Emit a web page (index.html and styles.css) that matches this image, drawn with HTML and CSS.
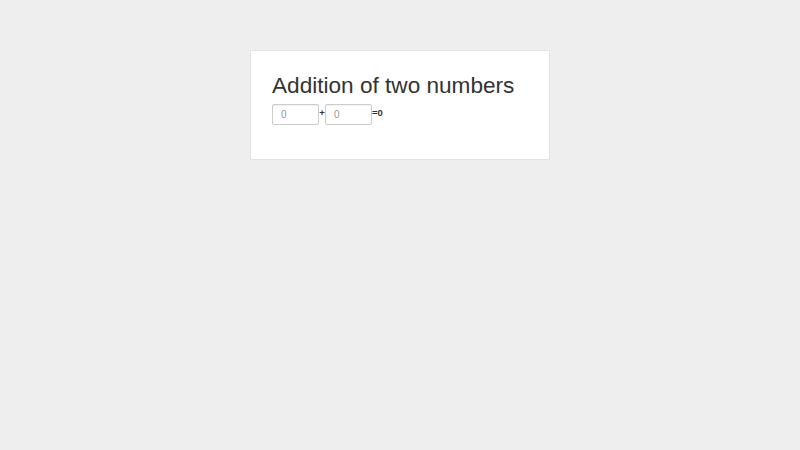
FILE: index.html
```html
<!DOCTYPE html>
<html>
<head>
<meta charset="utf-8">
<link rel="stylesheet" href="styles.css">
</head>
<body>
<div class="card">
  <h1 class="title">Addition of two numbers</h1>
  <div class="sum">
    <input class="num" type="text" placeholder="0"><b class="op">+</b><input class="num" type="text" placeholder="0"><b class="result">=0</b>
  </div>
</div>
</body>
</html>
```
FILE: styles.css
```css
html, body {
  margin: 0;
  padding: 0;
  background: #eeeeee;
  font-family: "Liberation Sans", Arial, sans-serif;
  color: #333333;
}

.card {
  box-sizing: border-box;
  width: 300px;
  height: 110px;
  margin: 50px auto 0;
  padding: 22px 21px 0;
  background: #ffffff;
  border: 1px solid #e3e3e3;
}

.title {
  margin: 0 0 5px;
  font-size: 22.6px;
  font-weight: 400;
  line-height: 26px;
  white-space: nowrap;
  color: #333333;
}

.sum {
  display: flex;
  align-items: flex-start;
}

.num {
  box-sizing: border-box;
  width: 47px;
  height: 21px;
  margin: 0;
  padding: 0 8px;
  border: 1px solid #cccccc;
  border-radius: 2px;
  font-family: inherit;
  font-size: 10px;
  color: #555555;
  box-shadow: inset 0 1px 1px rgba(0,0,0,0.05);
}

.num::placeholder {
  color: #999999;
}

.op, .result {
  font-size: 9.5px;
  font-weight: 700;
  line-height: 18px;
  color: #333333;
}

.op {
  width: 6px;
  text-align: center;
}

.result {
  margin-left: 0;
}
```
